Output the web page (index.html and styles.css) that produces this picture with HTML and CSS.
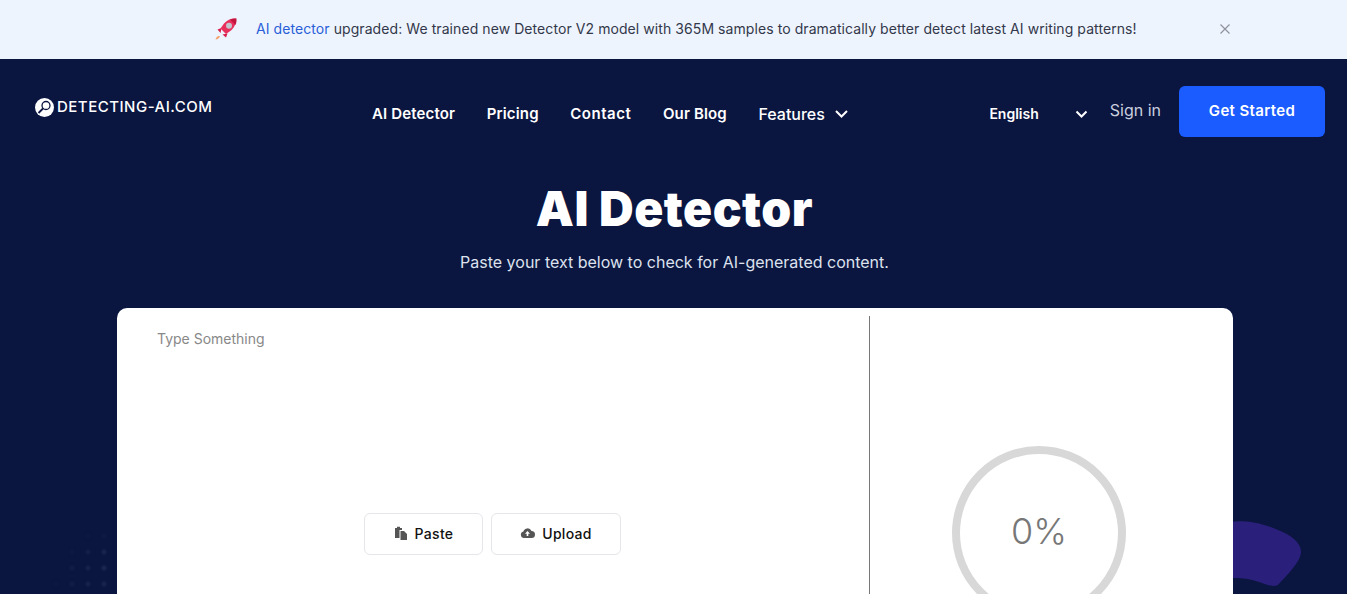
FILE: index.html
```html
<!DOCTYPE html>
<html lang="en">
<head>
<meta charset="utf-8">
<title>AI Detector</title>
<link rel="stylesheet" href="styles.css">
</head>
<body>
<div class="page">
  <div class="banner">
    <svg class="rocket" width="24" height="24" viewBox="0 0 24 24">
      <path d="M5 19c-2 0-3 2-3.500 3.500C3.500 22.500 5.500 21 6 19z" fill="#f5a06a"/>
      <path d="M3.500 12.500l4-1.500-1 5zM12 20.500l1.500-4-5 1z" fill="#d81f4c"/>
      <path d="M22.500 1.500c-5-.5-9.500 1.500-12.500 5l-3.500 5 5.500 5.500 5-3.500c3.500-3 5.500-7.500 5-12z" fill="#e8305c"/>
      <path d="M22.500 1.500c-2.500-.2-4.500.2-6.500 1l5.500 5.500c.8-2 1.200-4 1-6.500z" fill="#c3163f"/>
      <circle cx="15" cy="8.800" r="3" fill="#c3c5cc"/>
    </svg>
    <p class="banner-text"><a class="banner-link" href="#">AI detector</a> upgraded: We trained new Detector V2 model with 365M samples to dramatically better detect latest AI writing patterns!</p>
    <svg class="close" width="10" height="10" viewBox="0 0 10 10"><path d="M.5.500l9 9M9.500.500l-9 9" stroke="#8d929c" stroke-width="1.200" fill="none"/></svg>
  </div>

  <svg class="dots" width="120" height="94" viewBox="0 0 120 94">
    <g fill="#8a94b8">
      <circle cx="104" cy="52" r="2" opacity=".24"/><circle cx="88" cy="52" r="2" opacity=".14"/><circle cx="72" cy="52" r="2" opacity=".06"/><circle cx="56" cy="52" r="2" opacity=".03"/>
      <circle cx="104" cy="68" r="2" opacity=".26"/><circle cx="88" cy="68" r="2" opacity=".2"/><circle cx="72" cy="68" r="2" opacity=".12"/><circle cx="40" cy="68" r="2" opacity=".03"/>
      <circle cx="104" cy="84" r="2" opacity=".22"/><circle cx="88" cy="84" r="2" opacity=".2"/><circle cx="72" cy="84" r="2" opacity=".12"/><circle cx="56" cy="84" r="2" opacity=".05"/><circle cx="24" cy="84" r="2" opacity=".03"/>
      <circle cx="104" cy="36" r="2" opacity=".08"/><circle cx="88" cy="36" r="2" opacity=".05"/>
    </g>
  </svg>
  <svg class="blob" width="80" height="70" viewBox="0 0 80 70"><path d="M0 2C12 0 30 2 48 10C62 15 72 24 71 33C70 42 58 54 48 65C42 68 34 63 22 60C14 58 6 58 0 58z" fill="#2a1f7a"/></svg>

  <header class="header">
    <a class="logo" href="#">
      <svg class="logo-icon" width="19" height="19" viewBox="0 0 19 19">
        <circle cx="9.500" cy="9.500" r="9.500" fill="#fff"/>
        <circle cx="11" cy="7.500" r="4" fill="none" stroke="#0a1540" stroke-width="1.300"/>
        <path d="M8 10.500L3.500 15" stroke="#0a1540" stroke-width="1.800"/>
      </svg>
      <span class="logo-text">DETECTING-AI.COM</span>
    </a>
    <nav class="nav">
      <a class="nav-link" href="#">AI Detector</a>
      <a class="nav-link" href="#">Pricing</a>
      <a class="nav-link nav-contact" href="#">Contact</a>
      <a class="nav-link" href="#">Our Blog</a>
      <a class="nav-link nav-features" href="#">Features
        <svg width="15" height="10" viewBox="0 0 15 10"><path d="M2 2l5.500 5.500L13 2" stroke="#fff" stroke-width="2" fill="none"/></svg>
      </a>
    </nav>
    <div class="actions">
      <div class="lang"><span>English</span>
        <svg width="13" height="9" viewBox="0 0 13 9"><path d="M1.500 1.500l5 5 5-5" stroke="#fff" stroke-width="2" fill="none"/></svg>
      </div>
      <a class="signin" href="#">Sign in</a>
      <a class="cta" href="#">Get Started</a>
    </div>
  </header>

  <section class="hero">
    <h1 class="title">AI Detector</h1>
    <p class="subtitle">Paste your text below to check for AI-generated content.</p>
  </section>

  <main class="card">
    <div class="editor">
      <div class="placeholder">Type Something</div>
      <div class="buttons">
        <button class="btn btn-paste">
          <svg width="14" height="14" viewBox="0 0 14 14"><path d="M1 2h2V.8h3V2h2v2H5.500v8H1z" fill="#555"/><path d="M6.500 5H10l3 3v6H6.500z" fill="#555"/></svg>
          Paste
        </button>
        <button class="btn btn-upload">
          <svg width="15" height="12" viewBox="0 0 15 12"><path d="M4 11a3.300 3.300 0 0 1-.6-6.500A4.300 4.300 0 0 1 11.500 4 3.500 3.500 0 0 1 11.500 11z" fill="#555"/><path d="M7.500 4l-2.500 2.800h1.700V9h1.600V6.800H10z" fill="#fff"/></svg>
          Upload
        </button>
      </div>
    </div>
    <div class="result">
      <div class="gauge"><span class="gauge-value">0%</span></div>
    </div>
  </main>
</div>
</body>
</html>
```
FILE: styles.css
```css
* { box-sizing: border-box; }
html, body { margin: 0; padding: 0; }
body { font-family: "Inter", "Liberation Sans", sans-serif; background: #0a1540; }
a { text-decoration: none; color: inherit; }
.page { position: relative; height: 594px; overflow: hidden; background: #0a1540; }

.banner { height: 59px; background: #eef4fe; display: flex; align-items: center; padding: 0 0 2px 214px; }
.rocket { flex: none; margin-right: 18px; }
.banner-text { margin: 0; font-size: 14px; color: #33384a; letter-spacing: 0.075px; white-space: nowrap; }
.banner-link { color: #2a5fd8; }
.close { margin-left: 83px; flex: none; }

.dots { position: absolute; left: 0; top: 500px; filter: blur(1.5px); }
.blob { position: absolute; left: 1230px; top: 520px; }

.header { position: relative; display: flex; align-items: flex-start; height: 90px; padding: 27px 22px 0 35px; color: #fff; }
.logo { display: flex; align-items: center; gap: 3px; margin-top: 11px; width: 337px; }
.logo-text { font-size: 15px; font-weight: 500; letter-spacing: 0.5px; line-height: 20px; white-space: nowrap; position: relative; }
.nav { display: flex; gap: 31.5px; margin-top: 18px; align-items: center; }
.nav-link { font-size: 15px; font-weight: 600; line-height: 20px; letter-spacing: 0.15px; white-space: nowrap; }
.nav-contact { letter-spacing: 0.55px; }
.nav-features { display: flex; align-items: center; gap: 9px; font-weight: 500; font-size: 16px; letter-spacing: 0; }
.actions { display: flex; align-items: flex-start; margin-left: auto; }
.lang { display: flex; align-items: center; gap: 36px; margin-top: 18px; font-size: 14px; font-weight: 600; line-height: 20px; }
.signin { margin: 14px 0 0 22px; font-size: 16px; line-height: 20px; color: #c9cfdf; }
.cta { margin-left: 18px; width: 146px; height: 51px; padding-bottom: 2px; border-radius: 6px; background: #1a5cff; display: flex; align-items: center; justify-content: center; font-size: 15px; font-weight: 600; letter-spacing: 0.35px; }

.hero { position: relative; text-align: center; height: 159px; }
.title { margin: 0; padding: 31px 0 0 2px; font-size: 48px; font-weight: 900; line-height: 57px; letter-spacing: 0.5px; color: #fff; }
.subtitle { margin: 0; padding: 13px 0 0 2px; font-size: 16px; line-height: 24px; color: #dde2ee; }

.card { position: relative; margin: 0 114px 0 117px; height: 420px; background: #fff; border-radius: 10px; display: flex; padding-top: 8px; }
.editor { width: 752px; padding: 14px 40px 0; display: flex; flex-direction: column; align-items: stretch; }
.placeholder { font-size: 14px; line-height: 17px; color: #888; }
.buttons { display: flex; gap: 8px; margin-top: 166px; padding-left: 207px; }
.btn { height: 42px; border: 1px solid #e4e6ea; border-radius: 6px; background: #fff; display: flex; align-items: center; justify-content: center; gap: 7px; font-family: "Inter", sans-serif; font-size: 14px; font-weight: 500; letter-spacing: 0.3px; color: #111; padding: 0 0 2px; }
.btn-paste { width: 119px; }
.btn-upload { width: 130px; }
.result { flex: 1; border-left: 1px solid #777; padding: 130px 0 0 82px; }
.gauge { width: 174px; height: 174px; border: 8px solid #d8d8d8; border-radius: 50%; display: flex; align-items: center; justify-content: center; }
.gauge-value { font-size: 36px; font-weight: 300; color: #777; position: relative; bottom: 2px; }
```
